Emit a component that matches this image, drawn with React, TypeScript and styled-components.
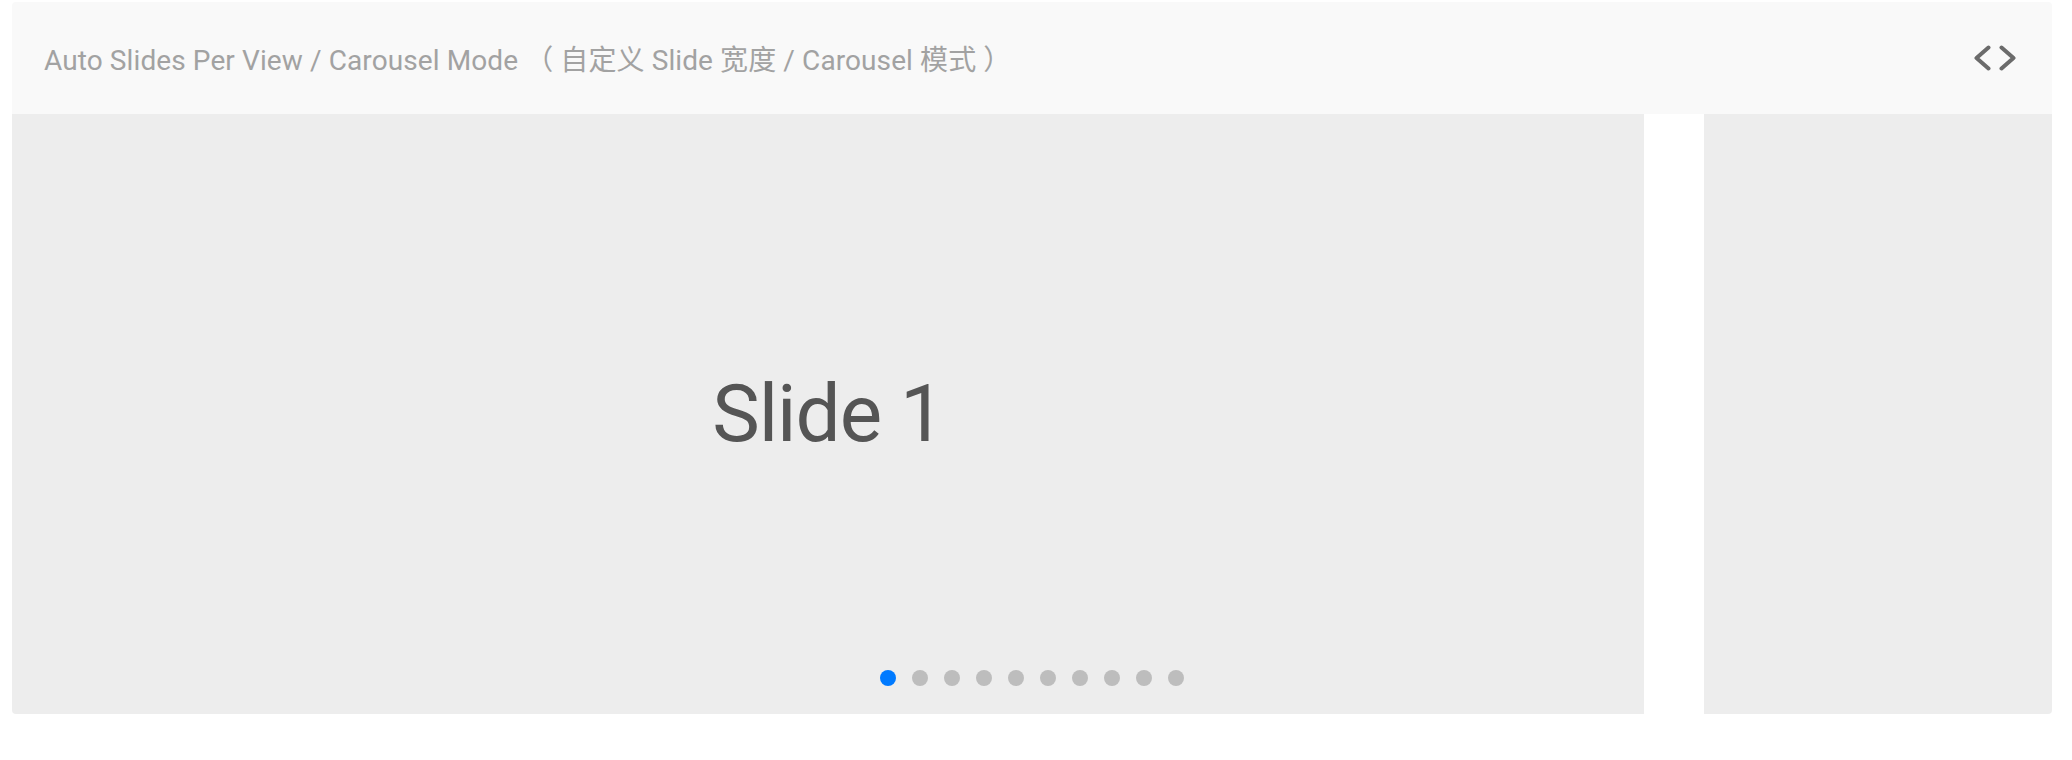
import React from 'react'
import styled, { createGlobalStyle } from 'styled-components'

const GlobalStyle = createGlobalStyle`
  html, body {
    margin: 0;
    padding: 0;
    background: #ffffff;
  }
  body {
    font-family: Roboto, "Noto Sans CJK SC", sans-serif;
  }
`;

const slides = Array.from({ length: 10 }, (_, i) => `Slide ${i + 1}`);

export default function App() {
    const active = 0;

    return (
        <>
            <GlobalStyle />
            <Card>
                <Header>
                    <Title>Auto Slides Per View / Carousel Mode （ 自定义 Slide 宽度 / Carousel 模式 ）</Title>
                    <Nav>
                        <NavButton aria-label="previous">
                            <svg width="17" height="26" viewBox="0 0 17 26">
                                <polyline points="14.5,2.5 2.5,13 14.5,23.5" fill="none" stroke="currentColor" strokeWidth="4" strokeLinejoin="round" strokeLinecap="round" />
                            </svg>
                        </NavButton>
                        <NavButton aria-label="next">
                            <svg width="17" height="26" viewBox="0 0 17 26">
                                <polyline points="2.5,2.5 14.5,13 2.5,23.5" fill="none" stroke="currentColor" strokeWidth="4" strokeLinejoin="round" strokeLinecap="round" />
                            </svg>
                        </NavButton>
                    </Nav>
                </Header>
                <Viewport>
                    <Track>
                        {slides.map((s) => (
                            <Slide key={s}>{s}</Slide>
                        ))}
                    </Track>
                    <Pagination>
                        {slides.map((s, i) => (
                            <Dot key={s} $active={i === active} />
                        ))}
                    </Pagination>
                </Viewport>
            </Card>
        </>
    )
}

const Card = styled.div`
    margin: 2px 20px 0 12px;
    border-radius: 4px;
    overflow: hidden;
`;

const Header = styled.div`
    height: 112px;
    background: #f9f9f9;
    display: flex;
    align-items: center;
    justify-content: space-between;
    padding: 0 36px 0 32px;
    box-sizing: border-box;
`;

const Title = styled.div`
    font-size: 28px;
    color: #a2a2a2;
    letter-spacing: 0.1px;
    white-space: nowrap;
`;

const Nav = styled.div`
    display: flex;
    align-items: center;
    gap: 8px;
`;

const NavButton = styled.button`
    border: none;
    background: none;
    padding: 0;
    color: #6b6b6b;
    display: flex;
    cursor: pointer;
`;

const Viewport = styled.div`
    position: relative;
    overflow: hidden;
    height: 600px;
`;

const Track = styled.div`
    display: flex;
    gap: 60px;
    height: 100%;
`;

const Slide = styled.div`
    flex: 0 0 80%;
    background: #ededed;
    display: flex;
    align-items: center;
    justify-content: center;
    font-size: 80px;
    letter-spacing: -1px;
    color: #555555;
`;

const Pagination = styled.div`
    position: absolute;
    left: 0;
    right: 0;
    bottom: 28px;
    display: flex;
    justify-content: center;
    gap: 16px;
`;

const Dot = styled.span<{ $active?: boolean }>`
    width: 16px;
    height: 16px;
    border-radius: 50%;
    background: ${(p) => (p.$active ? '#007aff' : '#bdbdbd')};
`;
